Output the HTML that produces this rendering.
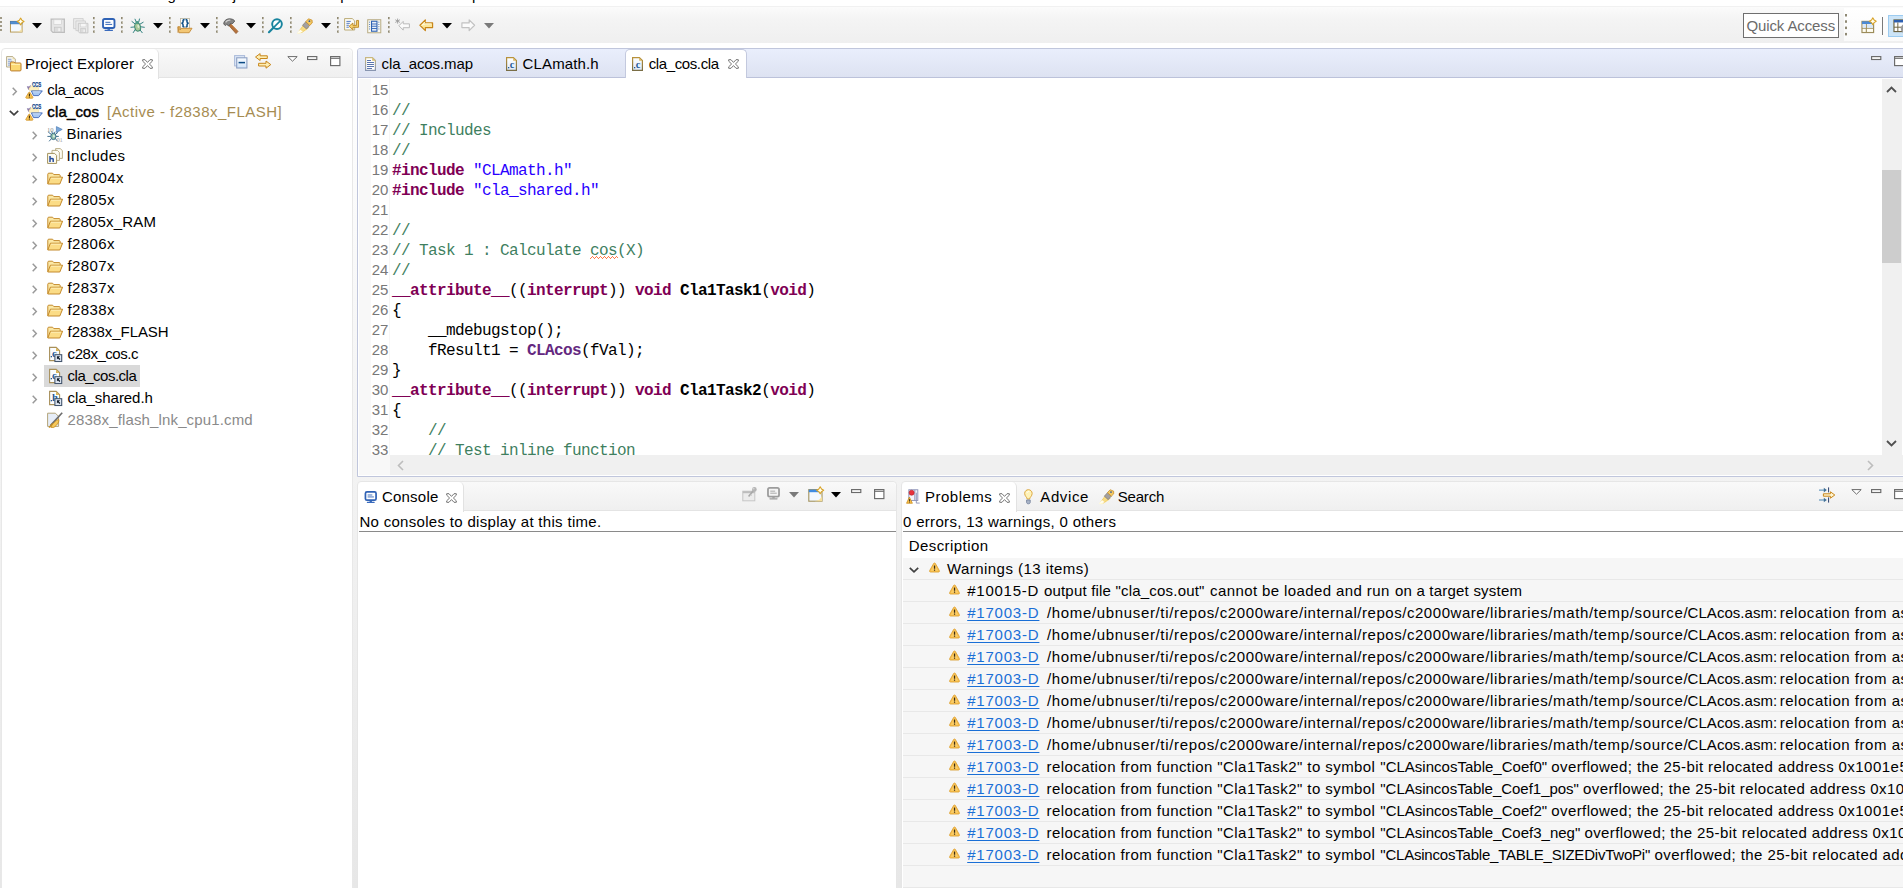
<!DOCTYPE html>
<html lang="en"><head><meta charset="utf-8"><title>workspace - cla_cos.cla - Code Composer Studio</title>
<style>
html,body{margin:0;padding:0}
body{width:1903px;height:888px;overflow:hidden;position:relative;background:linear-gradient(#fff 48px,#e7e7e7 888px);font-family:'Liberation Sans',sans-serif;font-size:15px;color:#000}
.t{position:absolute;white-space:pre;line-height:1}
.menu{position:absolute;top:-13.2px;font-size:15px;line-height:1;white-space:pre}
.ln{position:absolute;left:0;width:29.6px;text-align:right;font-size:15px;line-height:1;color:#787878;letter-spacing:-.2px}
.cl{position:absolute;left:33.5px;white-space:pre;line-height:1;font-family:'Liberation Mono',monospace;font-size:16.0px;letter-spacing:-.6px;color:#000}
svg{overflow:visible}
</style></head>
<body>
<div id="app" style="position:absolute;left:0;top:0;width:1903px;height:888px;overflow:hidden">
<div style="position:absolute;left:0px;top:0px;width:1903px;height:7px;background:#fff"></div>
<div style="position:absolute;left:0px;top:0px;width:1903px;height:5px;overflow:hidden"><span class="menu" style="left:8px">File</span><span class="menu" style="left:45px">Edit</span><span class="menu" style="left:85px">View</span><span class="menu" style="left:137.5px">Navigate</span><span class="menu" style="left:209.5px">Project</span><span class="menu" style="left:273px">Run</span><span class="menu" style="left:314.5px">Scripts</span><span class="menu" style="left:375px">Window</span><span class="menu" style="left:449.5px">Help</span></div>
<div style="position:absolute;left:0px;top:7px;width:1903px;height:36px;background:linear-gradient(#fbfbfb,#f4f4f4 35%,#efefef)"></div>
<div style="position:absolute;left:0px;top:6px;width:1903px;height:1px;background:#f1f1f1"></div>
<div style="position:absolute;left:1844px;top:8px;width:59px;height:33px;background:linear-gradient(#fff,#fafafa)"></div>
<svg style="position:absolute;left:0px;top:17px" width="2" height="15" viewBox="0 0 2 15"><rect x="0" y="0" width="2" height="2" fill="#a09a86"/><rect x="0" y="4" width="2" height="2" fill="#a09a86"/><rect x="0" y="8" width="2" height="2" fill="#a09a86"/><rect x="0" y="12" width="2" height="2" fill="#a09a86"/></svg><svg style="position:absolute;left:9px;top:17.6px" width="15.5" height="15.5" viewBox="0 0 16 16"><rect x="1.5" y="3.5" width="12" height="11" fill="#f4f9ff" stroke="#b89a55"/><rect x="1.5" y="3.5" width="12" height="2.6" fill="#4f8fd6" stroke="#3a74b8" stroke-width=".6"/><path d="M13.5 9C13 12 11 14 7.5 14.5H13.5Z" fill="#f3dfa0" opacity=".8"/><path d="M12.00 0.10L13.34 2.26L15.50 3.60L13.34 4.94L12.00 7.10L10.66 4.94L8.50 3.60L10.66 2.26Z" fill="#fffef2" stroke="#d9a326" stroke-width="1.1" stroke-linejoin="round"/></svg><svg style="position:absolute;left:31.5px;top:23px" width="10" height="6" viewBox="0 0 10 6"><path d="M0 0H10L5 5.6Z" fill="#000"/></svg><svg style="position:absolute;left:49.5px;top:17.6px" width="15.5" height="15.5" viewBox="0 0 16 16"><path d="M1.2 1.2H14.8V14.8H3L1.2 13Z" fill="#e6e6e6" stroke="#bdbdbd" stroke-width="1.3"/><rect x="4" y="1.8" width="8" height="5" fill="#f6f6f6" stroke="#cfcfcf" stroke-width=".7"/><rect x="4.5" y="9.5" width="7" height="5" fill="#dcdcdc" stroke="#c4c4c4" stroke-width=".7"/><rect x="8.5" y="10.5" width="2" height="3" fill="#f1f1f1"/></svg><svg style="position:absolute;left:73px;top:17.6px" width="15.5" height="15.5" viewBox="0 0 16 16"><path d="M1 1H10V3H1Z" fill="#e6e6e6"/><path d="M0.6 .6H10.5V11H.6Z" fill="#ececec" stroke="#cacaca" stroke-width=".8"/><path d="M3 3H12.8V13H3Z" fill="#ececec" stroke="#cacaca" stroke-width=".8"/><path d="M5.5 5.5H15.4V15.4H6.8L5.5 14Z" fill="#e9e9e9" stroke="#c4c4c4" stroke-width=".9"/><rect x="7.5" y="5.8" width="6" height="3.4" fill="#f6f6f6" stroke="#cfcfcf" stroke-width=".6"/><rect x="8" y="11" width="5" height="4.2" fill="#dcdcdc" stroke="#c4c4c4" stroke-width=".6"/><rect x="10.8" y="12" width="1.4" height="2.4" fill="#f3f3f3"/></svg><svg style="position:absolute;left:93px;top:17.3px" width="2" height="16" viewBox="0 0 2 16"><rect x="0" y="0.0" width="1.9" height="2.2" fill="#8f8974"/><rect x="1.1" y="0.3" width=".8" height="1.6" fill="#c9c4b2"/><rect x="0" y="4.5" width="1.9" height="2.2" fill="#8f8974"/><rect x="1.1" y="4.8" width=".8" height="1.6" fill="#c9c4b2"/><rect x="0" y="9.0" width="1.9" height="2.2" fill="#8f8974"/><rect x="1.1" y="9.3" width=".8" height="1.6" fill="#c9c4b2"/><rect x="0" y="13.5" width="1.9" height="2.2" fill="#8f8974"/><rect x="1.1" y="13.8" width=".8" height="1.6" fill="#c9c4b2"/></svg><svg style="position:absolute;left:102px;top:18.1px" width="13.5" height="13.5" viewBox="0 0 16 16"><rect x="1.2" y="1.2" width="13.6" height="10.6" rx="2" fill="#fdfeff" stroke="#2f62b5" stroke-width="2.2"/><rect x="4" y="4.5" width="6" height="1.2" fill="#3d6dbb"/><rect x="4" y="7" width="8" height="1.2" fill="#3d6dbb"/><rect x="6.5" y="12.5" width="3" height="1.5" fill="#2f62b5"/><rect x="3" y="13.8" width="10" height="1.6" rx=".5" fill="#3a6bbd"/></svg><svg style="position:absolute;left:121px;top:17.3px" width="2" height="16" viewBox="0 0 2 16"><rect x="0" y="0.0" width="1.9" height="2.2" fill="#8f8974"/><rect x="1.1" y="0.3" width=".8" height="1.6" fill="#c9c4b2"/><rect x="0" y="4.5" width="1.9" height="2.2" fill="#8f8974"/><rect x="1.1" y="4.8" width=".8" height="1.6" fill="#c9c4b2"/><rect x="0" y="9.0" width="1.9" height="2.2" fill="#8f8974"/><rect x="1.1" y="9.3" width=".8" height="1.6" fill="#c9c4b2"/><rect x="0" y="13.5" width="1.9" height="2.2" fill="#8f8974"/><rect x="1.1" y="13.8" width=".8" height="1.6" fill="#c9c4b2"/></svg><svg style="position:absolute;left:129.5px;top:17.6px" width="15.5" height="15.5" viewBox="0 0 16 16"><g stroke="#2e7f7f" stroke-width="1" fill="none" stroke-linecap="round"><path d="M5.6 6.4L2 3.6M10.2 6.4L13.6 4.4M5 9.2L1 9.6M10.8 9L14.8 9.6M5.6 11.6L3.4 15M10 11.8L12.6 15.2M6.6 4.4L5.2 1.2M9 4.2L9.8 1"/></g><ellipse cx="7.9" cy="9.4" rx="3" ry="4.2" fill="#a9c99a" stroke="#3e8a72" stroke-width="1" transform="rotate(-12 7.9 9.4)"/><ellipse cx="7.4" cy="4.6" rx="1.8" ry="1.4" fill="#4c9a86"/><ellipse cx="8.6" cy="8.6" rx="1" ry="1.8" fill="#dcecd2" transform="rotate(-12 8.6 8.6)"/></svg><svg style="position:absolute;left:152.5px;top:23px" width="10" height="6" viewBox="0 0 10 6"><path d="M0 0H10L5 5.6Z" fill="#000"/></svg><svg style="position:absolute;left:168.5px;top:17.3px" width="2" height="16" viewBox="0 0 2 16"><rect x="0" y="0.0" width="1.9" height="2.2" fill="#8f8974"/><rect x="1.1" y="0.3" width=".8" height="1.6" fill="#c9c4b2"/><rect x="0" y="4.5" width="1.9" height="2.2" fill="#8f8974"/><rect x="1.1" y="4.8" width=".8" height="1.6" fill="#c9c4b2"/><rect x="0" y="9.0" width="1.9" height="2.2" fill="#8f8974"/><rect x="1.1" y="9.3" width=".8" height="1.6" fill="#c9c4b2"/><rect x="0" y="13.5" width="1.9" height="2.2" fill="#8f8974"/><rect x="1.1" y="13.8" width=".8" height="1.6" fill="#c9c4b2"/></svg><svg style="position:absolute;left:176.5px;top:17.6px" width="15.5" height="15.5" viewBox="0 0 16 16"><rect x="3.6" y=".5" width="9.2" height="10.5" fill="#fff" stroke="#bdb8a4" stroke-width=".9"/><path d="M7.8 1.7C5.6 1.7 6.3 2.8 6.3 3.9C6.3 4.9 5.6 5.3 4.6 5.5C5.6 5.7 6.3 6.1 6.3 7.1C6.3 8.2 5.6 9.3 7.8 9.3M8.8 1.7C11 1.7 10.3 2.8 10.3 3.9C10.3 4.9 11 5.3 12 5.5C11 5.7 10.3 6.1 10.3 7.1C10.3 8.2 11 9.3 8.8 9.3" fill="none" stroke="#0d4f86" stroke-width="1.6"/><path d="M1 9L2 15.2H12.5L15.5 10.6H4.5L3 12.4V9Z" fill="#f3c775" stroke="#c28832" stroke-width=".9" stroke-linejoin="round"/><path d="M1 9V15.2" stroke="#c28832" stroke-width=".9"/></svg><svg style="position:absolute;left:199.5px;top:23px" width="10" height="6" viewBox="0 0 10 6"><path d="M0 0H10L5 5.6Z" fill="#000"/></svg><svg style="position:absolute;left:215.5px;top:17.3px" width="2" height="16" viewBox="0 0 2 16"><rect x="0" y="0.0" width="1.9" height="2.2" fill="#8f8974"/><rect x="1.1" y="0.3" width=".8" height="1.6" fill="#c9c4b2"/><rect x="0" y="4.5" width="1.9" height="2.2" fill="#8f8974"/><rect x="1.1" y="4.8" width=".8" height="1.6" fill="#c9c4b2"/><rect x="0" y="9.0" width="1.9" height="2.2" fill="#8f8974"/><rect x="1.1" y="9.3" width=".8" height="1.6" fill="#c9c4b2"/><rect x="0" y="13.5" width="1.9" height="2.2" fill="#8f8974"/><rect x="1.1" y="13.8" width=".8" height="1.6" fill="#c9c4b2"/></svg><svg style="position:absolute;left:222.5px;top:17.6px" width="16" height="16" viewBox="0 0 16 16"><path d="M7.6 5.6L15 13.4L13 15.6L5.8 7.4Z" fill="#b5713a" stroke="#8a5224" stroke-width=".7"/><path d="M8.4 6.4L14 12.4" stroke="#d79a62" stroke-width=".8"/><path d="M.8 6.2C.6 3.2 3 1 6.2 .8C8.6 .7 10.8 1.6 11.8 3L9.2 6L8.2 5L5.6 8L3.8 6.4L2.6 7.6Z" fill="#858585" stroke="#4e4e4e" stroke-width=".8" stroke-linejoin="round"/><path d="M2.6 4.4C3.6 2.8 5.4 2 7.4 2.2" stroke="#cfcfcf" stroke-width="1.1" fill="none"/></svg><svg style="position:absolute;left:245.5px;top:23px" width="10" height="6" viewBox="0 0 10 6"><path d="M0 0H10L5 5.6Z" fill="#000"/></svg><svg style="position:absolute;left:261.5px;top:17.3px" width="2" height="16" viewBox="0 0 2 16"><rect x="0" y="0.0" width="1.9" height="2.2" fill="#8f8974"/><rect x="1.1" y="0.3" width=".8" height="1.6" fill="#c9c4b2"/><rect x="0" y="4.5" width="1.9" height="2.2" fill="#8f8974"/><rect x="1.1" y="4.8" width=".8" height="1.6" fill="#c9c4b2"/><rect x="0" y="9.0" width="1.9" height="2.2" fill="#8f8974"/><rect x="1.1" y="9.3" width=".8" height="1.6" fill="#c9c4b2"/><rect x="0" y="13.5" width="1.9" height="2.2" fill="#8f8974"/><rect x="1.1" y="13.8" width=".8" height="1.6" fill="#c9c4b2"/></svg><svg style="position:absolute;left:268px;top:17.6px" width="15.5" height="15.5" viewBox="0 0 16 16"><circle cx="9.3" cy="6.3" r="5" fill="#fff" stroke="#18849e" stroke-width="2"/><path d="M5.6 10L1 14.6" stroke="#18849e" stroke-width="2.2" stroke-linecap="round"/><path d="M6.2 9.4L12.4 3.2" stroke="#18849e" stroke-width="1.6"/></svg><svg style="position:absolute;left:289.5px;top:17.3px" width="2" height="16" viewBox="0 0 2 16"><rect x="0" y="0.0" width="1.9" height="2.2" fill="#8f8974"/><rect x="1.1" y="0.3" width=".8" height="1.6" fill="#c9c4b2"/><rect x="0" y="4.5" width="1.9" height="2.2" fill="#8f8974"/><rect x="1.1" y="4.8" width=".8" height="1.6" fill="#c9c4b2"/><rect x="0" y="9.0" width="1.9" height="2.2" fill="#8f8974"/><rect x="1.1" y="9.3" width=".8" height="1.6" fill="#c9c4b2"/><rect x="0" y="13.5" width="1.9" height="2.2" fill="#8f8974"/><rect x="1.1" y="13.8" width=".8" height="1.6" fill="#c9c4b2"/></svg><svg style="position:absolute;left:296px;top:17.6px" width="17" height="16" viewBox="0 0 16 16"><path d="M.4 15.6L6.4 7L11.4 11.4L3.6 15.8Z" fill="#fff6c4"/><path d="M2.6 13L8 5.8L12.2 9.6L5.4 14.4Z" fill="#f8dc84" stroke="#e6bc52" stroke-width=".6"/><path d="M.6 15.6L3.6 11.4L6.4 13.8Z" fill="#fffdf0"/><path d="M6 7.4L9.2 3.8L13.2 7.4L10 11Z" fill="#a3a0a0" stroke="#747070" stroke-width=".6"/><path d="M9.2 3.8L12 .8L15.6 2.2L15.7 5L13.2 7.4Z" fill="#f3c964" stroke="#c98d26" stroke-width=".8" stroke-linejoin="round"/><circle cx="12.9" cy="3.2" r=".9" fill="#355c9c"/></svg><svg style="position:absolute;left:320.5px;top:23px" width="10" height="6" viewBox="0 0 10 6"><path d="M0 0H10L5 5.6Z" fill="#000"/></svg><svg style="position:absolute;left:336.5px;top:17.3px" width="2" height="16" viewBox="0 0 2 16"><rect x="0" y="0.0" width="1.9" height="2.2" fill="#8f8974"/><rect x="1.1" y="0.3" width=".8" height="1.6" fill="#c9c4b2"/><rect x="0" y="4.5" width="1.9" height="2.2" fill="#8f8974"/><rect x="1.1" y="4.8" width=".8" height="1.6" fill="#c9c4b2"/><rect x="0" y="9.0" width="1.9" height="2.2" fill="#8f8974"/><rect x="1.1" y="9.3" width=".8" height="1.6" fill="#c9c4b2"/><rect x="0" y="13.5" width="1.9" height="2.2" fill="#8f8974"/><rect x="1.1" y="13.8" width=".8" height="1.6" fill="#c9c4b2"/></svg><svg style="position:absolute;left:344px;top:17.6px" width="15.5" height="15.5" viewBox="0 0 16 16"><path d="M.6 .6H8.5L11 3V12.4H.6Z" fill="#fdfcf6" stroke="#b9a873" stroke-width="1"/><g stroke="#4f78c2" stroke-width="1"><path d="M2.5 3.5H7M2.5 5.5H6M2.5 7.5H5M2.5 9.5H5"/></g><path d="M13 2.5H15V9.6H9.2V12L5.2 8.6L9.2 5.2V7.6H13Z" fill="#f7d370" stroke="#b8821e" stroke-width=".9" stroke-linejoin="round"/></svg><svg style="position:absolute;left:367px;top:18.6px" width="14.5" height="14.5" viewBox="0 0 16 16"><rect x=".8" y=".8" width="14.4" height="14.4" fill="#fbfaf2" stroke="#b7ab83" stroke-width="1.1"/><rect x="5" y="2.5" width="6" height="11" fill="#eaf1fb" stroke="#2f63b4" stroke-width="1.2"/><g stroke="#2f63b4" stroke-width="1"><path d="M5 5.5H11M5 8H11M5 10.5H11"/></g><g fill="#2f63b4"><rect x="2.4" y="3" width="1" height="1"/><rect x="2.4" y="5.5" width="1" height="1"/><rect x="2.4" y="8" width="1" height="1"/><rect x="2.4" y="10.5" width="1" height="1"/><rect x="12.6" y="3" width="1" height="1"/><rect x="12.6" y="5.5" width="1" height="1"/><rect x="12.6" y="8" width="1" height="1"/><rect x="12.6" y="10.5" width="1" height="1"/></g></svg><svg style="position:absolute;left:387.5px;top:17.3px" width="2" height="16" viewBox="0 0 2 16"><rect x="0" y="0.0" width="1.9" height="2.2" fill="#8f8974"/><rect x="1.1" y="0.3" width=".8" height="1.6" fill="#c9c4b2"/><rect x="0" y="4.5" width="1.9" height="2.2" fill="#8f8974"/><rect x="1.1" y="4.8" width=".8" height="1.6" fill="#c9c4b2"/><rect x="0" y="9.0" width="1.9" height="2.2" fill="#8f8974"/><rect x="1.1" y="9.3" width=".8" height="1.6" fill="#c9c4b2"/><rect x="0" y="13.5" width="1.9" height="2.2" fill="#8f8974"/><rect x="1.1" y="13.8" width=".8" height="1.6" fill="#c9c4b2"/></svg><svg style="position:absolute;left:393.5px;top:17.6px" width="16.5" height="15.5" viewBox="0 0 16 16"><path d="M9 3.5L4.5 8L9 12.5V10H15.4V6H9Z" fill="#fbfbfb" stroke="#b9b9b9" stroke-width="1" stroke-linejoin="round"/><g stroke="#9a9a9a" stroke-width=".9"><path d="M3.2 .6V5.8M.8 1.8L5.6 4.6M5.6 1.8L.8 4.6"/></g></svg><svg style="position:absolute;left:418.5px;top:18.1px" width="14.5" height="14.5" viewBox="0 0 16 16"><path d="M7 2L1 8L7 14V10.6H15V5.4H7Z" fill="#fce79a" stroke="#c8861a" stroke-width="1.3" stroke-linejoin="round"/><path d="M7 4.2L3 8L7 6.5H13.6" stroke="#fffbe0" stroke-width="1" fill="none"/></svg><svg style="position:absolute;left:441.5px;top:23px" width="10" height="6" viewBox="0 0 10 6"><path d="M0 0H10L5 5.6Z" fill="#000"/></svg><svg style="position:absolute;left:460.5px;top:18.1px" width="14.5" height="14.5" viewBox="0 0 16 16"><path d="M9 2L15 8L9 14V10.6H1V5.4H9Z" fill="#fbfbfb" stroke="#c2c2c2" stroke-width="1.3" stroke-linejoin="round"/></svg><svg style="position:absolute;left:483.5px;top:23px" width="10" height="6" viewBox="0 0 10 6"><path d="M0 0H10L5 5.6Z" fill="#7a7a7a"/></svg><div style="position:absolute;left:1743px;top:13px;width:94px;height:23px;border:1px solid #6f6f6f;background:#fff"></div><svg style="position:absolute;left:1845px;top:14.4px" width="2" height="22" viewBox="0 0 2 22"><rect x="0" y="0.0" width="2" height="2.5" fill="#8f8974"/><rect x="0" y="6.3" width="2" height="2.5" fill="#8f8974"/><rect x="0" y="12.6" width="2" height="2.5" fill="#8f8974"/><rect x="0" y="18.9" width="2" height="2.5" fill="#8f8974"/></svg><svg style="position:absolute;left:1860.5px;top:18px" width="15.5" height="15.5" viewBox="0 0 16 16"><rect x="1" y="3.5" width="12" height="11.5" fill="#fffdf3" stroke="#9c8c5a" stroke-width="1.2"/><rect x="1" y="3.5" width="12" height="2.8" fill="#4c8ad4"/><path d="M5.5 6.3V15M1 10.5H13" stroke="#9c8c5a" stroke-width="1.1"/><rect x="1.8" y="6.6" width="3.2" height="3.4" fill="#d8e8fb"/><rect x="6.2" y="6.6" width="6.2" height="3.4" fill="#d8e8fb"/><path d="M12.20 -0.10L13.54 2.06L15.70 3.40L13.54 4.74L12.20 6.90L10.86 4.74L8.70 3.40L10.86 2.06Z" fill="#fffef2" stroke="#d9a326" stroke-width="1.1" stroke-linejoin="round"/></svg><div style="position:absolute;left:1882px;top:17px;width:1px;height:18px;background:#7a7a7a"></div><div style="position:absolute;left:1888px;top:15px;width:20px;height:19.5px;background:#cce4f7;border:1px solid #9ccbf0"></div><svg style="position:absolute;left:1893px;top:18px" width="15.5" height="15.5" viewBox="0 0 16 16"><rect x="1" y="2" width="14" height="12" fill="#fff" stroke="#6b6240" stroke-width="1.2"/><rect x="1" y="2" width="14" height="2.6" fill="#2d5fb0"/><path d="M5 4.6V14M1 9.5H15" stroke="#6b6240" stroke-width="1"/><circle cx="13" cy="11" r="5" fill="#9b9b9b"/></svg>
<div style="position:absolute;left:1px;top:48px;width:352px;height:842px;border:1px solid #e8e8e8;border-radius:4px 4px 0 0;background:#fff;box-sizing:border-box"></div><div style="position:absolute;left:2px;top:49px;width:350px;height:28.5px;background:linear-gradient(#f9f9f9,#efefef);border-radius:5px 5px 0 0"></div><div style="position:absolute;left:2px;top:77px;width:350px;height:1px;background:#e4e4e4"></div><div style="position:absolute;left:2px;top:49px;width:157px;height:29.5px;background:#fff;border-radius:5px 5px 0 0;border-right:1px solid #e2e2e2;box-sizing:border-box"></div><svg style="position:absolute;left:5.8px;top:55.6px" width="15.5" height="15.5" viewBox="0 0 16 16"><path d="M.6 .6H7L9.6 3.2V11.4H.6Z" fill="#f8f6ec" stroke="#ada17a" stroke-width=".9"/><path d="M6.8 .8V3.4H9.4Z" fill="#e6d8a6"/><g stroke="#6f93d6" stroke-width=".9"><path d="M2 3.4H5.6M2 5.4H6.4M2 7.4H5.2M2 9.4H4.4"/></g><path d="M4.6 7.3C4.6 6.6 5 6.2 5.6 6.2H8.2L9.2 7.2H14.6C15.2 7.2 15.5 7.6 15.5 8.2V14.4C15.5 15 15.1 15.4 14.5 15.4H5.6C5 15.4 4.6 15 4.6 14.4Z" fill="#fbd873" stroke="#b97a2c" stroke-width="1"/><path d="M5.4 8.6H14.6" stroke="#fff3c0" stroke-width="1"/></svg><svg style="position:absolute;left:141.5px;top:59px" width="11" height="10" viewBox="0 0 11 10"><path d="M.7 .7H3L5.5 3.4L8 .7H10.3V2.2L7.4 5L10.3 7.8V9.3H8L5.5 6.6L3 9.3H.7V7.8L3.6 5L.7 2.2Z" fill="#fff" stroke="#666" stroke-width=".9" stroke-linejoin="round"/></svg><svg style="position:absolute;left:234px;top:55px" width="16" height="16" viewBox="0 0 16 16"><defs><linearGradient id="clg" x1="0" y1="0" x2="0" y2="1"><stop offset="0" stop-color="#fafdff"/><stop offset="1" stop-color="#cfe2f8"/></linearGradient></defs><rect x=".6" y=".6" width="10" height="10.3" fill="#dde8f7" stroke="#a9bad9" stroke-width="1"/><rect x="2.7" y="2.8" width="10.2" height="10.2" fill="url(#clg)" stroke="#8da0c4" stroke-width="1.1"/><path d="M4.6 7.6H11" stroke="#0b4a84" stroke-width="1.5"/></svg><svg style="position:absolute;left:255px;top:53px" width="16" height="16" viewBox="0 0 16 16"><path d="M.5 4L5.1 .6V2.8H12.3V5.5H5.1V7.5Z" fill="#fdeeb4" stroke="#c8861a" stroke-width="1" stroke-linejoin="round"/><path d="M15.8 11.6L11 8V10.3H3.6V13H11V15.2Z" fill="#fdeeb4" stroke="#c8861a" stroke-width="1" stroke-linejoin="round"/></svg><svg style="position:absolute;left:286.5px;top:55.8px" width="11" height="6" viewBox="0 0 11 6"><path d="M.8 .6H10.2L5.5 5.2Z" fill="#fff" stroke="#6a6a6a" stroke-width="1"/></svg><svg style="position:absolute;left:306.5px;top:56px" width="11" height="5" viewBox="0 0 11 5"><rect x=".6" y=".6" width="9.2" height="2.9" fill="#fff" stroke="#6a6a6a" stroke-width="1.15"/></svg><svg style="position:absolute;left:329.5px;top:56px" width="11" height="11" viewBox="0 0 11 11"><rect x=".6" y=".6" width="9.3" height="9" fill="#fff" stroke="#6a6a6a" stroke-width="1.15"/><path d="M.6 2.3H9.9" stroke="#6a6a6a" stroke-width="1.1"/></svg><svg style="position:absolute;left:11.5px;top:86.6px" width="6" height="10" viewBox="0 0 6 10"><path d="M.7 .7L4.3 4.5L.7 8.3" fill="none" stroke="#9a9a9a" stroke-width="1.5"/></svg><svg style="position:absolute;left:26px;top:81.5px" width="16" height="16" viewBox="0 0 16 16"><text x="5.9" y="4.9" font-family="Liberation Sans" font-size="6.3" font-weight="bold" fill="#174a8c" stroke="#174a8c" stroke-width=".25" textLength="9.4" lengthAdjust="spacingAndGlyphs">CCS</text><path d="M.8 4.2L3.2 4.4L4.6 2.8L4.6 5.4L6 6.8L3.6 6.6L2.4 8Z" fill="#8a7aa8"/><path d="M3 6.2L6.4 3.4L7.2 5.6H12.6V8.6H3.6Z" fill="#fdf0c0" stroke="#f1d98a" stroke-width=".5"/><path d="M5.4 8.9H16.3L12.6 13.6H7.5Z" fill="#a9c8f2" stroke="#3d66b8" stroke-width=".9" stroke-linejoin="round"/><path d="M6.6 9.8H14.4" stroke="#dbe9fb" stroke-width=".8"/><path d="M2.7 10.5C3 9.9 3.7 9.9 4 10.5L6.8 15.2C7.1 15.8 6.8 16.2 6.2 16.2H.5C-.1 16.2 -.4 15.8 -.1 15.2Z" fill="#f9c552" stroke="#cf922a" stroke-width=".8"/><rect x="2.85" y="11.6" width="1" height="2.4" fill="#2a1c08"/><rect x="2.85" y="14.5" width="1" height="1" fill="#2a1c08"/></svg><svg style="position:absolute;left:8.7px;top:110.2px" width="10" height="6" viewBox="0 0 10 6"><path d="M.8 .8L5 4.8L9.2 .8" fill="none" stroke="#404040" stroke-width="1.7"/></svg><svg style="position:absolute;left:26px;top:103.5px" width="16" height="16" viewBox="0 0 16 16"><text x="5.9" y="4.9" font-family="Liberation Sans" font-size="6.3" font-weight="bold" fill="#174a8c" stroke="#174a8c" stroke-width=".25" textLength="9.4" lengthAdjust="spacingAndGlyphs">CCS</text><path d="M.8 4.2L3.2 4.4L4.6 2.8L4.6 5.4L6 6.8L3.6 6.6L2.4 8Z" fill="#8a7aa8"/><path d="M3 6.2L6.4 3.4L7.2 5.6H12.6V8.6H3.6Z" fill="#fdf0c0" stroke="#f1d98a" stroke-width=".5"/><path d="M5.4 8.9H16.3L12.6 13.6H7.5Z" fill="#a9c8f2" stroke="#3d66b8" stroke-width=".9" stroke-linejoin="round"/><path d="M6.6 9.8H14.4" stroke="#dbe9fb" stroke-width=".8"/><path d="M2.7 10.5C3 9.9 3.7 9.9 4 10.5L6.8 15.2C7.1 15.8 6.8 16.2 6.2 16.2H.5C-.1 16.2 -.4 15.8 -.1 15.2Z" fill="#f9c552" stroke="#cf922a" stroke-width=".8"/><rect x="2.85" y="11.6" width="1" height="2.4" fill="#2a1c08"/><rect x="2.85" y="14.5" width="1" height="1" fill="#2a1c08"/></svg><svg style="position:absolute;left:31.5px;top:130.6px" width="6" height="10" viewBox="0 0 6 10"><path d="M.7 .7L4.3 4.5L.7 8.3" fill="none" stroke="#9a9a9a" stroke-width="1.5"/></svg><svg style="position:absolute;left:46.5px;top:125.5px" width="16" height="16" viewBox="0 0 16 16"><text x="0" y="5.6" font-family="Liberation Serif" font-size="6.6" fill="#8a8a8a">10</text><path d="M9.4 .6L15.2 3.4L9.4 6.4Z" fill="#7aa6d8" stroke="#4f7fb8" stroke-width=".7"/><g stroke="#3f6f8f" stroke-width="1" fill="none" stroke-linecap="round"><path d="M4.4 8.4L1.6 6.4M4 10.4H.8M4.6 12.4L2.4 15M8.4 8.4L10.6 6.6M8.8 10.4H11.4M8.2 12.4L10 14.6M5.6 7.4L4.8 6M7.2 7.4L8 6"/></g><ellipse cx="6.4" cy="10.4" rx="2.6" ry="3.2" fill="#8fbfa8" stroke="#3f6f8f" stroke-width="1"/><ellipse cx="6.9" cy="10.2" rx="1" ry="1.4" fill="#d6eadc"/><text x="9.4" y="15.6" font-family="Liberation Serif" font-size="6.4" fill="#a4a4a4">01</text></svg><svg style="position:absolute;left:31.5px;top:152.6px" width="6" height="10" viewBox="0 0 6 10"><path d="M.7 .7L4.3 4.5L.7 8.3" fill="none" stroke="#9a9a9a" stroke-width="1.5"/></svg><svg style="position:absolute;left:46.5px;top:147.5px" width="16" height="16" viewBox="0 0 16 16"><path d="M8.6 .6H13.2L15.4 2.6V10.4H8.6Z" fill="#fdfbf2" stroke="#b3a67c" stroke-width=".9"/><path d="M5 2.4H10.4L12.4 4.4V12.4H5Z" fill="#fdfbf2" stroke="#b3a67c" stroke-width=".9"/><path d="M.6 5.4H7.6L9.6 7.4V15.4H.6Z" fill="#fdfbf2" stroke="#a3925c" stroke-width="1"/><path d="M3 8V14M3 11.2C3.4 10.4 6.2 10 6.2 11.6V14" fill="none" stroke="#274f9e" stroke-width="1.5"/></svg><svg style="position:absolute;left:31.5px;top:174.6px" width="6" height="10" viewBox="0 0 6 10"><path d="M.7 .7L4.3 4.5L.7 8.3" fill="none" stroke="#9a9a9a" stroke-width="1.5"/></svg><svg style="position:absolute;left:46.5px;top:169.5px" width="16" height="16" viewBox="0 0 16 16"><path d="M.8 13.8V4.2C.8 3.6 1.2 3.2 1.8 3.2H5.6L6.8 4.6H12.2C12.8 4.6 13.2 5 13.2 5.6V7" fill="#fce9a6" stroke="#c48a2c" stroke-width="1" stroke-linejoin="round"/><path d="M.8 14L3.4 7.2H15.6L12.8 14Z" fill="#fbdc86" stroke="#c48a2c" stroke-width="1" stroke-linejoin="round"/><path d="M4 8.2H14" stroke="#fff4c8" stroke-width=".8"/></svg><svg style="position:absolute;left:31.5px;top:196.6px" width="6" height="10" viewBox="0 0 6 10"><path d="M.7 .7L4.3 4.5L.7 8.3" fill="none" stroke="#9a9a9a" stroke-width="1.5"/></svg><svg style="position:absolute;left:46.5px;top:191.5px" width="16" height="16" viewBox="0 0 16 16"><path d="M.8 13.8V4.2C.8 3.6 1.2 3.2 1.8 3.2H5.6L6.8 4.6H12.2C12.8 4.6 13.2 5 13.2 5.6V7" fill="#fce9a6" stroke="#c48a2c" stroke-width="1" stroke-linejoin="round"/><path d="M.8 14L3.4 7.2H15.6L12.8 14Z" fill="#fbdc86" stroke="#c48a2c" stroke-width="1" stroke-linejoin="round"/><path d="M4 8.2H14" stroke="#fff4c8" stroke-width=".8"/></svg><svg style="position:absolute;left:31.5px;top:218.6px" width="6" height="10" viewBox="0 0 6 10"><path d="M.7 .7L4.3 4.5L.7 8.3" fill="none" stroke="#9a9a9a" stroke-width="1.5"/></svg><svg style="position:absolute;left:46.5px;top:213.5px" width="16" height="16" viewBox="0 0 16 16"><path d="M.8 13.8V4.2C.8 3.6 1.2 3.2 1.8 3.2H5.6L6.8 4.6H12.2C12.8 4.6 13.2 5 13.2 5.6V7" fill="#fce9a6" stroke="#c48a2c" stroke-width="1" stroke-linejoin="round"/><path d="M.8 14L3.4 7.2H15.6L12.8 14Z" fill="#fbdc86" stroke="#c48a2c" stroke-width="1" stroke-linejoin="round"/><path d="M4 8.2H14" stroke="#fff4c8" stroke-width=".8"/></svg><svg style="position:absolute;left:31.5px;top:240.6px" width="6" height="10" viewBox="0 0 6 10"><path d="M.7 .7L4.3 4.5L.7 8.3" fill="none" stroke="#9a9a9a" stroke-width="1.5"/></svg><svg style="position:absolute;left:46.5px;top:235.5px" width="16" height="16" viewBox="0 0 16 16"><path d="M.8 13.8V4.2C.8 3.6 1.2 3.2 1.8 3.2H5.6L6.8 4.6H12.2C12.8 4.6 13.2 5 13.2 5.6V7" fill="#fce9a6" stroke="#c48a2c" stroke-width="1" stroke-linejoin="round"/><path d="M.8 14L3.4 7.2H15.6L12.8 14Z" fill="#fbdc86" stroke="#c48a2c" stroke-width="1" stroke-linejoin="round"/><path d="M4 8.2H14" stroke="#fff4c8" stroke-width=".8"/></svg><svg style="position:absolute;left:31.5px;top:262.6px" width="6" height="10" viewBox="0 0 6 10"><path d="M.7 .7L4.3 4.5L.7 8.3" fill="none" stroke="#9a9a9a" stroke-width="1.5"/></svg><svg style="position:absolute;left:46.5px;top:257.5px" width="16" height="16" viewBox="0 0 16 16"><path d="M.8 13.8V4.2C.8 3.6 1.2 3.2 1.8 3.2H5.6L6.8 4.6H12.2C12.8 4.6 13.2 5 13.2 5.6V7" fill="#fce9a6" stroke="#c48a2c" stroke-width="1" stroke-linejoin="round"/><path d="M.8 14L3.4 7.2H15.6L12.8 14Z" fill="#fbdc86" stroke="#c48a2c" stroke-width="1" stroke-linejoin="round"/><path d="M4 8.2H14" stroke="#fff4c8" stroke-width=".8"/></svg><svg style="position:absolute;left:31.5px;top:284.6px" width="6" height="10" viewBox="0 0 6 10"><path d="M.7 .7L4.3 4.5L.7 8.3" fill="none" stroke="#9a9a9a" stroke-width="1.5"/></svg><svg style="position:absolute;left:46.5px;top:279.5px" width="16" height="16" viewBox="0 0 16 16"><path d="M.8 13.8V4.2C.8 3.6 1.2 3.2 1.8 3.2H5.6L6.8 4.6H12.2C12.8 4.6 13.2 5 13.2 5.6V7" fill="#fce9a6" stroke="#c48a2c" stroke-width="1" stroke-linejoin="round"/><path d="M.8 14L3.4 7.2H15.6L12.8 14Z" fill="#fbdc86" stroke="#c48a2c" stroke-width="1" stroke-linejoin="round"/><path d="M4 8.2H14" stroke="#fff4c8" stroke-width=".8"/></svg><svg style="position:absolute;left:31.5px;top:306.6px" width="6" height="10" viewBox="0 0 6 10"><path d="M.7 .7L4.3 4.5L.7 8.3" fill="none" stroke="#9a9a9a" stroke-width="1.5"/></svg><svg style="position:absolute;left:46.5px;top:301.5px" width="16" height="16" viewBox="0 0 16 16"><path d="M.8 13.8V4.2C.8 3.6 1.2 3.2 1.8 3.2H5.6L6.8 4.6H12.2C12.8 4.6 13.2 5 13.2 5.6V7" fill="#fce9a6" stroke="#c48a2c" stroke-width="1" stroke-linejoin="round"/><path d="M.8 14L3.4 7.2H15.6L12.8 14Z" fill="#fbdc86" stroke="#c48a2c" stroke-width="1" stroke-linejoin="round"/><path d="M4 8.2H14" stroke="#fff4c8" stroke-width=".8"/></svg><svg style="position:absolute;left:31.5px;top:328.6px" width="6" height="10" viewBox="0 0 6 10"><path d="M.7 .7L4.3 4.5L.7 8.3" fill="none" stroke="#9a9a9a" stroke-width="1.5"/></svg><svg style="position:absolute;left:46.5px;top:323.5px" width="16" height="16" viewBox="0 0 16 16"><path d="M.8 13.8V4.2C.8 3.6 1.2 3.2 1.8 3.2H5.6L6.8 4.6H12.2C12.8 4.6 13.2 5 13.2 5.6V7" fill="#fce9a6" stroke="#c48a2c" stroke-width="1" stroke-linejoin="round"/><path d="M.8 14L3.4 7.2H15.6L12.8 14Z" fill="#fbdc86" stroke="#c48a2c" stroke-width="1" stroke-linejoin="round"/><path d="M4 8.2H14" stroke="#fff4c8" stroke-width=".8"/></svg><svg style="position:absolute;left:31.5px;top:350.6px" width="6" height="10" viewBox="0 0 6 10"><path d="M.7 .7L4.3 4.5L.7 8.3" fill="none" stroke="#9a9a9a" stroke-width="1.5"/></svg><svg style="position:absolute;left:46.5px;top:345.5px" width="16" height="16" viewBox="0 0 16 16"><path d="M2.6 1.4H9.2L12.6 4.8V14.6H2.6Z" fill="#fbfdff" stroke="#a8905a" stroke-width="1.1"/><path d="M9 1.6V5H12.4Z" fill="#dcb65a"/><rect x="3.7" y="10" width="1.3" height="1.3" fill="#1f5a96"/><text x="5.1" y="11.4" font-family="Liberation Serif" font-size="10.5" font-weight="bold" fill="#1f5a96">c</text><g transform="translate(-.7 .3)"><rect x="8.6" y="8.4" width="6.8" height="6.8" fill="#e4ecf8" stroke="#44566e" stroke-width="1.1"/><path d="M13.8 9.9H10.6V13.2L11.7 12.1L13.1 13.7L14.1 12.8L12.6 11.2Z" fill="#15202e" transform="translate(0 0)"/></g></svg><div style="position:absolute;left:44px;top:365px;width:95.8px;height:21.5px;background:#d9d9d9"></div><svg style="position:absolute;left:31.5px;top:372.6px" width="6" height="10" viewBox="0 0 6 10"><path d="M.7 .7L4.3 4.5L.7 8.3" fill="none" stroke="#9a9a9a" stroke-width="1.5"/></svg><svg style="position:absolute;left:46.5px;top:367.5px" width="16" height="16" viewBox="0 0 16 16"><path d="M2.6 1.4H9.2L12.6 4.8V14.6H2.6Z" fill="#fbfdff" stroke="#a8905a" stroke-width="1.1"/><path d="M9 1.6V5H12.4Z" fill="#dcb65a"/><rect x="3.7" y="10" width="1.3" height="1.3" fill="#1f5a96"/><text x="5.1" y="11.4" font-family="Liberation Serif" font-size="10.5" font-weight="bold" fill="#1f5a96">c</text><g transform="translate(-.7 .3)"><rect x="8.6" y="8.4" width="6.8" height="6.8" fill="#e4ecf8" stroke="#44566e" stroke-width="1.1"/><path d="M13.8 9.9H10.6V13.2L11.7 12.1L13.1 13.7L14.1 12.8L12.6 11.2Z" fill="#15202e" transform="translate(0 0)"/></g></svg><svg style="position:absolute;left:31.5px;top:394.6px" width="6" height="10" viewBox="0 0 6 10"><path d="M.7 .7L4.3 4.5L.7 8.3" fill="none" stroke="#9a9a9a" stroke-width="1.5"/></svg><svg style="position:absolute;left:46.5px;top:389.5px" width="16" height="16" viewBox="0 0 16 16"><path d="M2.6 1.4H9.2L12.6 4.8V14.6H2.6Z" fill="#fbfdff" stroke="#a8905a" stroke-width="1.1"/><path d="M9 1.6V5H12.4Z" fill="#dcb65a"/><rect x="3.7" y="10" width="1.3" height="1.3" fill="#1f5a96"/><text x="5.1" y="11.4" font-family="Liberation Serif" font-size="10.5" font-weight="bold" fill="#1f5a96">h</text><g transform="translate(-.7 .3)"><rect x="8.6" y="8.4" width="6.8" height="6.8" fill="#e4ecf8" stroke="#44566e" stroke-width="1.1"/><path d="M13.8 9.9H10.6V13.2L11.7 12.1L13.1 13.7L14.1 12.8L12.6 11.2Z" fill="#15202e" transform="translate(0 0)"/></g></svg><svg style="position:absolute;left:46.5px;top:411.5px" width="16" height="16" viewBox="0 0 16 16"><path d="M.6 1.2H8.4L11.6 4.4V14.4H.6Z" fill="#e6edf8" stroke="#b3a47a" stroke-width="1"/><path d="M15.2 .8L3.4 13.6" stroke="#6b6b6b" stroke-width="1.6"/><path d="M3.8 15.4C5 12 8.6 8.6 11.6 7.4C12.6 9 10.6 13 6.8 15.4Z" fill="#f6c85a" stroke="#c48a1c" stroke-width=".8"/><path d="M2 15.6L5.6 11.4" stroke="#c48a1c" stroke-width="1.1"/></svg>
<div style="position:absolute;left:357px;top:48px;width:1560px;height:429px;border:1px solid #c0c6dc;border-radius:3px 0 0 0;background:#fff;box-sizing:border-box"></div><div style="position:absolute;left:358px;top:49px;width:1545px;height:28.5px;background:linear-gradient(#e9eefc,#dde2f1);border-radius:2px 0 0 0"></div><div style="position:absolute;left:358px;top:77px;width:1545px;height:1px;background:#bcc2da"></div><div style="position:absolute;left:625px;top:49px;width:121.5px;height:29px;background:#fff;border:1px solid #c3c9de;border-bottom:none;border-radius:5px 5px 0 0;box-sizing:border-box"></div><svg style="position:absolute;left:365px;top:57px" width="11" height="14" viewBox="0 0 11 14"><defs><linearGradient id="tg" x1="0" y1="0" x2="0" y2="1"><stop offset="0" stop-color="#c9b882"/><stop offset="1" stop-color="#8895b0"/></linearGradient></defs><path d="M.6 .6H7.4L10.4 3.6V13.4H.6Z" fill="#fff" stroke="url(#tg)" stroke-width="1.2"/><path d="M7.2 .8V3.8H10.2Z" fill="#d8bd6c"/><g stroke="#5a74ad" stroke-width="1" stroke-linecap="round"><path d="M2.4 3.5H5.6M2.4 5.5H8.6M2.4 7.5H8.6M2.4 9.5H8.6M2.4 11.5H6.6"/></g></svg><svg style="position:absolute;left:506px;top:57px" width="11" height="14" viewBox="0 0 11 14"><defs><linearGradient id="cg" x1="0" y1="0" x2="0" y2="1"><stop offset="0" stop-color="#b8923c"/><stop offset="1" stop-color="#7a6e46"/></linearGradient><linearGradient id="cf" x1="0" y1="0" x2="0" y2="1"><stop offset="0" stop-color="#fff"/><stop offset="1" stop-color="#dfeafb"/></linearGradient></defs><path d="M.6 .6H7.4L10.4 3.6V13.4H.6Z" fill="url(#cf)" stroke="url(#cg)" stroke-width="1.2"/><path d="M7.2 .8V3.8H10.2Z" fill="#dcb65a"/><rect x="2" y="10" width="1.3" height="1.3" fill="#1f5a96"/><text x="3.7" y="11.3" font-family="Liberation Serif" font-size="10.5" font-weight="bold" fill="#1f5a96">c</text></svg><svg style="position:absolute;left:632px;top:57px" width="11" height="14" viewBox="0 0 11 14"><defs><linearGradient id="cg" x1="0" y1="0" x2="0" y2="1"><stop offset="0" stop-color="#b8923c"/><stop offset="1" stop-color="#7a6e46"/></linearGradient><linearGradient id="cf" x1="0" y1="0" x2="0" y2="1"><stop offset="0" stop-color="#fff"/><stop offset="1" stop-color="#dfeafb"/></linearGradient></defs><path d="M.6 .6H7.4L10.4 3.6V13.4H.6Z" fill="url(#cf)" stroke="url(#cg)" stroke-width="1.2"/><path d="M7.2 .8V3.8H10.2Z" fill="#dcb65a"/><rect x="2" y="10" width="1.3" height="1.3" fill="#1f5a96"/><text x="3.7" y="11.3" font-family="Liberation Serif" font-size="10.5" font-weight="bold" fill="#1f5a96">c</text></svg><svg style="position:absolute;left:727.5px;top:59px" width="11" height="10" viewBox="0 0 11 10"><path d="M.7 .7H3L5.5 3.4L8 .7H10.3V2.2L7.4 5L10.3 7.8V9.3H8L5.5 6.6L3 9.3H.7V7.8L3.6 5L.7 2.2Z" fill="#fff" stroke="#666" stroke-width=".9" stroke-linejoin="round"/></svg><svg style="position:absolute;left:1871px;top:56px" width="11" height="5" viewBox="0 0 11 5"><rect x=".6" y=".6" width="9.2" height="2.9" fill="#fff" stroke="#6a6a6a" stroke-width="1.15"/></svg><svg style="position:absolute;left:1894px;top:56px" width="11" height="11" viewBox="0 0 11 11"><rect x=".6" y=".6" width="9.3" height="9" fill="#fff" stroke="#6a6a6a" stroke-width="1.15"/><path d="M.6 2.3H9.9" stroke="#6a6a6a" stroke-width="1.1"/></svg><div style="position:absolute;left:359px;top:79px;width:12px;height:396px;background:#f8f8f8"></div><div style="position:absolute;left:389px;top:79px;width:1px;height:376px;background:#f6f6f6"></div><div style="position:absolute;left:1882px;top:78.5px;width:20px;height:376px;background:#f0f0f0"></div><div style="position:absolute;left:1882px;top:169.8px;width:19px;height:93.2px;background:#cdcdcd"></div><svg style="position:absolute;left:1886px;top:86px" width="11" height="7" viewBox="0 0 11 7"><path d="M1 6L5.5 1.5L10 6" fill="none" stroke="#505050" stroke-width="1.8"/></svg><svg style="position:absolute;left:1886px;top:439.5px" width="11" height="7" viewBox="0 0 11 7"><path d="M1 1L5.5 5.5L10 1" fill="none" stroke="#505050" stroke-width="1.8"/></svg><div style="position:absolute;left:371px;top:454.5px;width:19px;height:20.5px;background:#f8f8f8"></div><div style="position:absolute;left:390px;top:454.5px;width:1513px;height:20.5px;background:#f0f0f0"></div><svg style="position:absolute;left:396.5px;top:459.5px" width="7" height="11" viewBox="0 0 7 11"><path d="M6 1L1.5 5.5L6 10" fill="none" stroke="#bdbdbd" stroke-width="1.6"/></svg><svg style="position:absolute;left:1866.5px;top:459.5px" width="7" height="11" viewBox="0 0 7 11"><path d="M1 1L5.5 5.5L1 10" fill="none" stroke="#bdbdbd" stroke-width="1.6"/></svg><svg style="position:absolute;left:590px;top:256px" width="28" height="3" viewBox="0 0 28 3"><g fill="#ff7a48" shape-rendering="crispEdges"><rect x="0" y="2" width="1" height="1"/><rect x="1" y="1" width="1" height="1"/><rect x="2" y="0" width="1" height="1"/><rect x="3" y="1" width="1" height="1"/><rect x="4" y="2" width="1" height="1"/><rect x="5" y="1" width="1" height="1"/><rect x="6" y="0" width="1" height="1"/><rect x="7" y="1" width="1" height="1"/><rect x="8" y="2" width="1" height="1"/><rect x="9" y="1" width="1" height="1"/><rect x="10" y="0" width="1" height="1"/><rect x="11" y="1" width="1" height="1"/><rect x="12" y="2" width="1" height="1"/><rect x="13" y="1" width="1" height="1"/><rect x="14" y="0" width="1" height="1"/><rect x="15" y="1" width="1" height="1"/><rect x="16" y="2" width="1" height="1"/><rect x="17" y="1" width="1" height="1"/><rect x="18" y="0" width="1" height="1"/><rect x="19" y="1" width="1" height="1"/><rect x="20" y="2" width="1" height="1"/><rect x="21" y="1" width="1" height="1"/><rect x="22" y="0" width="1" height="1"/><rect x="23" y="1" width="1" height="1"/><rect x="24" y="2" width="1" height="1"/><rect x="25" y="1" width="1" height="1"/><rect x="26" y="0" width="1" height="1"/><rect x="27" y="1" width="1" height="1"/></g></svg>
<div style="position:absolute;left:358.5px;top:78.5px;width:1523.5px;height:376px;overflow:hidden"><div class="ln" style="top:3.70px">15</div><div class="cl" style="top:4.73px"></div><div class="ln" style="top:23.70px">16</div><div class="cl" style="top:24.73px"><span style="color:#3f7f5f">//</span></div><div class="ln" style="top:43.70px">17</div><div class="cl" style="top:44.73px"><span style="color:#3f7f5f">// Includes</span></div><div class="ln" style="top:63.70px">18</div><div class="cl" style="top:64.73px"><span style="color:#3f7f5f">//</span></div><div class="ln" style="top:83.70px">19</div><div class="cl" style="top:84.73px"><span style="color:#7f0055;font-weight:bold">#include</span> <span style="color:#2a00ff">&quot;CLAmath.h&quot;</span></div><div class="ln" style="top:103.70px">20</div><div class="cl" style="top:104.73px"><span style="color:#7f0055;font-weight:bold">#include</span> <span style="color:#2a00ff">&quot;cla_shared.h&quot;</span></div><div class="ln" style="top:123.70px">21</div><div class="cl" style="top:124.73px"></div><div class="ln" style="top:143.70px">22</div><div class="cl" style="top:144.73px"><span style="color:#3f7f5f">//</span></div><div class="ln" style="top:163.70px">23</div><div class="cl" style="top:164.73px"><span style="color:#3f7f5f">// Task 1 : Calculate </span><span style="color:#3f7f5f">cos</span><span style="color:#3f7f5f">(X)</span></div><div class="ln" style="top:183.70px">24</div><div class="cl" style="top:184.73px"><span style="color:#3f7f5f">//</span></div><div class="ln" style="top:203.70px">25</div><div class="cl" style="top:204.73px"><span style="color:#7f0055;font-weight:bold">__attribute__</span>((<span style="color:#7f0055;font-weight:bold">interrupt</span>)) <span style="color:#7f0055;font-weight:bold">void</span> <span style="color:#000;font-weight:bold">Cla1Task1</span>(<span style="color:#7f0055;font-weight:bold">void</span>)</div><div class="ln" style="top:223.70px">26</div><div class="cl" style="top:224.73px">{</div><div class="ln" style="top:243.70px">27</div><div class="cl" style="top:244.73px">    __mdebugstop();</div><div class="ln" style="top:263.70px">28</div><div class="cl" style="top:264.73px">    fResult1 = <span style="color:#642880;font-weight:bold">CLAcos</span>(fVal);</div><div class="ln" style="top:283.70px">29</div><div class="cl" style="top:284.73px">}</div><div class="ln" style="top:303.70px">30</div><div class="cl" style="top:304.73px"><span style="color:#7f0055;font-weight:bold">__attribute__</span>((<span style="color:#7f0055;font-weight:bold">interrupt</span>)) <span style="color:#7f0055;font-weight:bold">void</span> <span style="color:#000;font-weight:bold">Cla1Task2</span>(<span style="color:#7f0055;font-weight:bold">void</span>)</div><div class="ln" style="top:323.70px">31</div><div class="cl" style="top:324.73px">{</div><div class="ln" style="top:343.70px">32</div><div class="cl" style="top:344.73px">    <span style="color:#3f7f5f">//</span></div><div class="ln" style="top:363.70px">33</div><div class="cl" style="top:364.73px">    <span style="color:#3f7f5f">// Test inline function</span></div></div>
<div style="position:absolute;left:357px;top:481px;width:540px;height:410px;border:1px solid #e6e6e6;border-radius:4px 4px 0 0;background:#fff;box-sizing:border-box"></div><div style="position:absolute;left:358px;top:482px;width:538px;height:28.5px;background:linear-gradient(#f9f9f9,#efefef);border-radius:5px 5px 0 0"></div><div style="position:absolute;left:358px;top:510px;width:538px;height:1px;background:#e4e4e4"></div><div style="position:absolute;left:358px;top:482px;width:105.5px;height:29.5px;background:#fff;border-radius:5px 5px 0 0;border-right:1px solid #e2e2e2;box-sizing:border-box"></div><svg style="position:absolute;left:363.5px;top:490.5px" width="13.5" height="12.5" viewBox="0 0 16 16"><rect x="1.2" y="1.2" width="13.6" height="10.6" rx="2" fill="#fdfeff" stroke="#2f62b5" stroke-width="2.2"/><rect x="4" y="4.5" width="6" height="1.2" fill="#3d6dbb"/><rect x="4" y="7" width="8" height="1.2" fill="#3d6dbb"/><rect x="6.5" y="12.5" width="3" height="1.5" fill="#2f62b5"/><rect x="3" y="13.8" width="10" height="1.6" rx=".5" fill="#3a6bbd"/></svg><svg style="position:absolute;left:445.5px;top:492.5px" width="11" height="10" viewBox="0 0 11 10"><path d="M.7 .7H3L5.5 3.4L8 .7H10.3V2.2L7.4 5L10.3 7.8V9.3H8L5.5 6.6L3 9.3H.7V7.8L3.6 5L.7 2.2Z" fill="#fff" stroke="#666" stroke-width=".9" stroke-linejoin="round"/></svg><svg style="position:absolute;left:742.3px;top:486.2px" width="16" height="16" viewBox="0 0 16 16"><rect x=".8" y="5.2" width="12" height="9.6" fill="#ececec" stroke="#c6c6c6" stroke-width="1"/><rect x=".8" y="5.2" width="12" height="2" fill="#bdbdbd"/><path d="M6.6 10.4L11.4 4.6" stroke="#a8a8a8" stroke-width="1.6"/><path d="M8.4 8.2L9.8 9.4" stroke="#bdbdbd" stroke-width="1"/><circle cx="12.4" cy="3.4" r="2.3" fill="#b4b4b4"/><circle cx="11.8" cy="2.8" r=".8" fill="#dadada"/></svg><svg style="position:absolute;left:767px;top:487.2px" width="13" height="13" viewBox="0 0 16 16"><rect x="1.2" y="1.2" width="13.6" height="10.6" rx="2" fill="#f4f4f4" stroke="#9c9c9c" stroke-width="2.2"/><rect x="4" y="4.5" width="6" height="1.2" fill="#a8a8a8"/><rect x="4" y="7" width="8" height="1.2" fill="#a8a8a8"/><rect x="6.5" y="12.5" width="3" height="1.5" fill="#9c9c9c"/><rect x="3" y="13.8" width="10" height="1.6" rx=".5" fill="#9c9c9c"/></svg><svg style="position:absolute;left:788.5px;top:491.5px" width="10" height="6" viewBox="0 0 10 6"><path d="M0 0H10L5 5.6Z" fill="#7a7a7a"/></svg><svg style="position:absolute;left:807.6px;top:485.6px" width="16" height="16" viewBox="0 0 16 16"><rect x=".8" y="3.6" width="13.2" height="11.6" fill="#f2f8ff" stroke="#a3925c" stroke-width="1.1"/><rect x=".8" y="3.6" width="13.2" height="2.6" fill="#3f8be0"/><path d="M14 9.4C13.4 12.4 11 14.6 6.6 15.2H14Z" fill="#f6df9a"/><path d="M12.20 0.80L13.54 2.96L15.70 4.30L13.54 5.64L12.20 7.80L10.86 5.64L8.70 4.30L10.86 2.96Z" fill="#fffef2" stroke="#d9a326" stroke-width="1.1" stroke-linejoin="round"/></svg><svg style="position:absolute;left:830.5px;top:491.5px" width="10" height="6" viewBox="0 0 10 6"><path d="M0 0H10L5 5.6Z" fill="#000"/></svg><svg style="position:absolute;left:850.5px;top:489px" width="11" height="5" viewBox="0 0 11 5"><rect x=".6" y=".6" width="9.2" height="2.9" fill="#fff" stroke="#6a6a6a" stroke-width="1.15"/></svg><svg style="position:absolute;left:873.5px;top:489px" width="11" height="11" viewBox="0 0 11 11"><rect x=".6" y=".6" width="9.3" height="9" fill="#fff" stroke="#6a6a6a" stroke-width="1.15"/><path d="M.6 2.3H9.9" stroke="#6a6a6a" stroke-width="1.1"/></svg><div style="position:absolute;left:359px;top:531px;width:537px;height:1px;background:#8a8a8a"></div>
<div style="position:absolute;left:901px;top:481px;width:1010px;height:410px;border:1px solid #e6e6e6;border-radius:4px 0 0 0;background:#fff;box-sizing:border-box"></div><div style="position:absolute;left:902px;top:482px;width:1001px;height:28.5px;background:linear-gradient(#f9f9f9,#efefef);border-radius:5px 0 0 0"></div><div style="position:absolute;left:902px;top:510px;width:1001px;height:1px;background:#e4e4e4"></div><div style="position:absolute;left:902px;top:482px;width:114.5px;height:29.5px;background:#fff;border-radius:5px 5px 0 0;border-right:1px solid #e2e2e2;box-sizing:border-box"></div><svg style="position:absolute;left:905.5px;top:489px" width="15" height="15" viewBox="0 0 16 16"><rect x="3" y=".8" width="9.6" height="11.4" fill="#f4f4fa" stroke="#8d93b8" stroke-width="1"/><path d="M9.4 1V12M11 4V15M11 15H14.6" stroke="#8d93b8" stroke-width="1"/><circle cx="6" cy="4" r="2.7" fill="#e8323c" stroke="#b31c28" stroke-width=".6"/><path d="M3.6 8.6L.6 15.2H6.8Z" fill="#f8c04a" stroke="#c88a18" stroke-width=".8" stroke-linejoin="round"/><rect x="3.2" y="10.8" width=".9" height="2.4" fill="#222"/><rect x="3.2" y="13.6" width=".9" height=".8" fill="#222"/></svg><svg style="position:absolute;left:998.5px;top:492.5px" width="11" height="10" viewBox="0 0 11 10"><path d="M.7 .7H3L5.5 3.4L8 .7H10.3V2.2L7.4 5L10.3 7.8V9.3H8L5.5 6.6L3 9.3H.7V7.8L3.6 5L.7 2.2Z" fill="#fff" stroke="#666" stroke-width=".9" stroke-linejoin="round"/></svg><svg style="position:absolute;left:1023.3px;top:489.4px" width="10.8" height="15.4" viewBox="2 0 9 16"><path d="M5.2 10.4C5.2 8.6 2.6 7.4 2.6 4.6C2.6 2.2 4.6 .7 6.5 .7C8.4 .7 10.4 2.2 10.4 4.6C10.4 7.4 7.8 8.6 7.8 10.4Z" fill="#fff3b8" stroke="#dba43a" stroke-width="1"/><path d="M4.6 11.4H8.4V14C8.4 14.8 7.6 15.4 6.5 15.4C5.4 15.4 4.6 14.8 4.6 14Z" fill="#a9b4c8" stroke="#6f7d98" stroke-width=".8"/><path d="M5 4C5.4 3 6.4 2.4 7.4 2.6" stroke="#fff" stroke-width="1" fill="none"/></svg><svg style="position:absolute;left:1097.5px;top:489.3px" width="16.5" height="15.5" viewBox="0 0 16 16"><path d="M.4 15.6L6.4 7L11.4 11.4L3.6 15.8Z" fill="#fff6c4"/><path d="M2.6 13L8 5.8L12.2 9.6L5.4 14.4Z" fill="#f8dc84" stroke="#e6bc52" stroke-width=".6"/><path d="M.6 15.6L3.6 11.4L6.4 13.8Z" fill="#fffdf0"/><path d="M6 7.4L9.2 3.8L13.2 7.4L10 11Z" fill="#a3a0a0" stroke="#747070" stroke-width=".6"/><path d="M9.2 3.8L12 .8L15.6 2.2L15.7 5L13.2 7.4Z" fill="#f3c964" stroke="#c98d26" stroke-width=".8" stroke-linejoin="round"/><circle cx="12.9" cy="3.2" r=".9" fill="#355c9c"/></svg><svg style="position:absolute;left:1819px;top:486.5px" width="16" height="16" viewBox="0 0 16 16"><g stroke="#4a86b4" stroke-width="1"><path d="M0 3.1H5.4M0 13H5.4"/></g><g fill="#3f6f96"><path d="M4.8 .8L7.8 3.1L4.8 5.4Z"/><path d="M4.8 10.7L7.8 13L4.8 15.3Z"/></g><g stroke="#2c3f6c" stroke-width="1"><path d="M9.6 .4V5.4M9.6 10.4V15.6"/></g><path d="M4.4 6.8H11.4V4.8L15.8 8L11.4 11.2V9.2H4.4Z" fill="#fff6d2" stroke="#c8861a" stroke-width="1" stroke-linejoin="round"/></svg><svg style="position:absolute;left:1850.5px;top:488.8px" width="11" height="6" viewBox="0 0 11 6"><path d="M.8 .6H10.2L5.5 5.2Z" fill="#fff" stroke="#6a6a6a" stroke-width="1"/></svg><svg style="position:absolute;left:1871px;top:489px" width="11" height="5" viewBox="0 0 11 5"><rect x=".6" y=".6" width="9.2" height="2.9" fill="#fff" stroke="#6a6a6a" stroke-width="1.15"/></svg><svg style="position:absolute;left:1894px;top:489px" width="11" height="11" viewBox="0 0 11 11"><rect x=".6" y=".6" width="9.3" height="9" fill="#fff" stroke="#6a6a6a" stroke-width="1.15"/><path d="M.6 2.3H9.9" stroke="#6a6a6a" stroke-width="1.1"/></svg><div style="position:absolute;left:903px;top:531px;width:1001px;height:1px;background:#8a8a8a"></div><div style="position:absolute;left:903px;top:558px;width:1000px;height:330px;background:#f6f6f6"></div><div style="position:absolute;left:903px;top:579px;width:1000px;height:1px;background:#e8e8e8"></div><div style="position:absolute;left:903px;top:601px;width:1000px;height:1px;background:#e8e8e8"></div><div style="position:absolute;left:903px;top:623px;width:1000px;height:1px;background:#e8e8e8"></div><div style="position:absolute;left:903px;top:645px;width:1000px;height:1px;background:#e8e8e8"></div><div style="position:absolute;left:903px;top:667px;width:1000px;height:1px;background:#e8e8e8"></div><div style="position:absolute;left:903px;top:689px;width:1000px;height:1px;background:#e8e8e8"></div><div style="position:absolute;left:903px;top:711px;width:1000px;height:1px;background:#e8e8e8"></div><div style="position:absolute;left:903px;top:733px;width:1000px;height:1px;background:#e8e8e8"></div><div style="position:absolute;left:903px;top:755px;width:1000px;height:1px;background:#e8e8e8"></div><div style="position:absolute;left:903px;top:777px;width:1000px;height:1px;background:#e8e8e8"></div><div style="position:absolute;left:903px;top:799px;width:1000px;height:1px;background:#e8e8e8"></div><div style="position:absolute;left:903px;top:821px;width:1000px;height:1px;background:#e8e8e8"></div><div style="position:absolute;left:903px;top:843px;width:1000px;height:1px;background:#e8e8e8"></div><div style="position:absolute;left:903px;top:865px;width:1000px;height:1px;background:#e8e8e8"></div><div style="position:absolute;left:903px;top:887px;width:1000px;height:1px;background:#e8e8e8"></div><div style="position:absolute;left:903px;top:909px;width:1000px;height:1px;background:#e8e8e8"></div><svg style="position:absolute;left:908.5px;top:567.3px" width="10" height="6" viewBox="0 0 10 6"><path d="M.8 .8L5 4.8L9.2 .8" fill="none" stroke="#404040" stroke-width="1.7"/></svg><svg style="position:absolute;left:928.5px;top:561.5px" width="11" height="11" viewBox="0 0 13 12"><path d="M5.5 1.2C6 .4 7 .4 7.5 1.2L12.2 9.6C12.7 10.5 12.2 11.4 11.2 11.4H1.8C.8 11.4 .3 10.5 .8 9.6Z" fill="#f9c14e" stroke="#d99a2a" stroke-width=".9"/><path d="M6.5 2.2L10.8 10H2.2Z" fill="#fbd477" opacity=".6"/><rect x="5.8" y="3.6" width="1.5" height="4" rx=".3" fill="#3a2a10"/><rect x="5.8" y="8.4" width="1.5" height="1.5" rx=".3" fill="#3a2a10"/></svg>
<svg style="position:absolute;left:948.5px;top:583.5px" width="11" height="11" viewBox="0 0 13 12"><path d="M5.5 1.2C6 .4 7 .4 7.5 1.2L12.2 9.6C12.7 10.5 12.2 11.4 11.2 11.4H1.8C.8 11.4 .3 10.5 .8 9.6Z" fill="#f9c14e" stroke="#d99a2a" stroke-width=".9"/><path d="M6.5 2.2L10.8 10H2.2Z" fill="#fbd477" opacity=".6"/><rect x="5.8" y="3.6" width="1.5" height="4" rx=".3" fill="#3a2a10"/><rect x="5.8" y="8.4" width="1.5" height="1.5" rx=".3" fill="#3a2a10"/></svg><svg style="position:absolute;left:948.5px;top:605.5px" width="11" height="11" viewBox="0 0 13 12"><path d="M5.5 1.2C6 .4 7 .4 7.5 1.2L12.2 9.6C12.7 10.5 12.2 11.4 11.2 11.4H1.8C.8 11.4 .3 10.5 .8 9.6Z" fill="#f9c14e" stroke="#d99a2a" stroke-width=".9"/><path d="M6.5 2.2L10.8 10H2.2Z" fill="#fbd477" opacity=".6"/><rect x="5.8" y="3.6" width="1.5" height="4" rx=".3" fill="#3a2a10"/><rect x="5.8" y="8.4" width="1.5" height="1.5" rx=".3" fill="#3a2a10"/></svg><svg style="position:absolute;left:948.5px;top:627.5px" width="11" height="11" viewBox="0 0 13 12"><path d="M5.5 1.2C6 .4 7 .4 7.5 1.2L12.2 9.6C12.7 10.5 12.2 11.4 11.2 11.4H1.8C.8 11.4 .3 10.5 .8 9.6Z" fill="#f9c14e" stroke="#d99a2a" stroke-width=".9"/><path d="M6.5 2.2L10.8 10H2.2Z" fill="#fbd477" opacity=".6"/><rect x="5.8" y="3.6" width="1.5" height="4" rx=".3" fill="#3a2a10"/><rect x="5.8" y="8.4" width="1.5" height="1.5" rx=".3" fill="#3a2a10"/></svg><svg style="position:absolute;left:948.5px;top:649.5px" width="11" height="11" viewBox="0 0 13 12"><path d="M5.5 1.2C6 .4 7 .4 7.5 1.2L12.2 9.6C12.7 10.5 12.2 11.4 11.2 11.4H1.8C.8 11.4 .3 10.5 .8 9.6Z" fill="#f9c14e" stroke="#d99a2a" stroke-width=".9"/><path d="M6.5 2.2L10.8 10H2.2Z" fill="#fbd477" opacity=".6"/><rect x="5.8" y="3.6" width="1.5" height="4" rx=".3" fill="#3a2a10"/><rect x="5.8" y="8.4" width="1.5" height="1.5" rx=".3" fill="#3a2a10"/></svg><svg style="position:absolute;left:948.5px;top:671.5px" width="11" height="11" viewBox="0 0 13 12"><path d="M5.5 1.2C6 .4 7 .4 7.5 1.2L12.2 9.6C12.7 10.5 12.2 11.4 11.2 11.4H1.8C.8 11.4 .3 10.5 .8 9.6Z" fill="#f9c14e" stroke="#d99a2a" stroke-width=".9"/><path d="M6.5 2.2L10.8 10H2.2Z" fill="#fbd477" opacity=".6"/><rect x="5.8" y="3.6" width="1.5" height="4" rx=".3" fill="#3a2a10"/><rect x="5.8" y="8.4" width="1.5" height="1.5" rx=".3" fill="#3a2a10"/></svg><svg style="position:absolute;left:948.5px;top:693.5px" width="11" height="11" viewBox="0 0 13 12"><path d="M5.5 1.2C6 .4 7 .4 7.5 1.2L12.2 9.6C12.7 10.5 12.2 11.4 11.2 11.4H1.8C.8 11.4 .3 10.5 .8 9.6Z" fill="#f9c14e" stroke="#d99a2a" stroke-width=".9"/><path d="M6.5 2.2L10.8 10H2.2Z" fill="#fbd477" opacity=".6"/><rect x="5.8" y="3.6" width="1.5" height="4" rx=".3" fill="#3a2a10"/><rect x="5.8" y="8.4" width="1.5" height="1.5" rx=".3" fill="#3a2a10"/></svg><svg style="position:absolute;left:948.5px;top:715.5px" width="11" height="11" viewBox="0 0 13 12"><path d="M5.5 1.2C6 .4 7 .4 7.5 1.2L12.2 9.6C12.7 10.5 12.2 11.4 11.2 11.4H1.8C.8 11.4 .3 10.5 .8 9.6Z" fill="#f9c14e" stroke="#d99a2a" stroke-width=".9"/><path d="M6.5 2.2L10.8 10H2.2Z" fill="#fbd477" opacity=".6"/><rect x="5.8" y="3.6" width="1.5" height="4" rx=".3" fill="#3a2a10"/><rect x="5.8" y="8.4" width="1.5" height="1.5" rx=".3" fill="#3a2a10"/></svg><svg style="position:absolute;left:948.5px;top:737.5px" width="11" height="11" viewBox="0 0 13 12"><path d="M5.5 1.2C6 .4 7 .4 7.5 1.2L12.2 9.6C12.7 10.5 12.2 11.4 11.2 11.4H1.8C.8 11.4 .3 10.5 .8 9.6Z" fill="#f9c14e" stroke="#d99a2a" stroke-width=".9"/><path d="M6.5 2.2L10.8 10H2.2Z" fill="#fbd477" opacity=".6"/><rect x="5.8" y="3.6" width="1.5" height="4" rx=".3" fill="#3a2a10"/><rect x="5.8" y="8.4" width="1.5" height="1.5" rx=".3" fill="#3a2a10"/></svg><svg style="position:absolute;left:948.5px;top:759.5px" width="11" height="11" viewBox="0 0 13 12"><path d="M5.5 1.2C6 .4 7 .4 7.5 1.2L12.2 9.6C12.7 10.5 12.2 11.4 11.2 11.4H1.8C.8 11.4 .3 10.5 .8 9.6Z" fill="#f9c14e" stroke="#d99a2a" stroke-width=".9"/><path d="M6.5 2.2L10.8 10H2.2Z" fill="#fbd477" opacity=".6"/><rect x="5.8" y="3.6" width="1.5" height="4" rx=".3" fill="#3a2a10"/><rect x="5.8" y="8.4" width="1.5" height="1.5" rx=".3" fill="#3a2a10"/></svg><svg style="position:absolute;left:948.5px;top:781.5px" width="11" height="11" viewBox="0 0 13 12"><path d="M5.5 1.2C6 .4 7 .4 7.5 1.2L12.2 9.6C12.7 10.5 12.2 11.4 11.2 11.4H1.8C.8 11.4 .3 10.5 .8 9.6Z" fill="#f9c14e" stroke="#d99a2a" stroke-width=".9"/><path d="M6.5 2.2L10.8 10H2.2Z" fill="#fbd477" opacity=".6"/><rect x="5.8" y="3.6" width="1.5" height="4" rx=".3" fill="#3a2a10"/><rect x="5.8" y="8.4" width="1.5" height="1.5" rx=".3" fill="#3a2a10"/></svg><svg style="position:absolute;left:948.5px;top:803.5px" width="11" height="11" viewBox="0 0 13 12"><path d="M5.5 1.2C6 .4 7 .4 7.5 1.2L12.2 9.6C12.7 10.5 12.2 11.4 11.2 11.4H1.8C.8 11.4 .3 10.5 .8 9.6Z" fill="#f9c14e" stroke="#d99a2a" stroke-width=".9"/><path d="M6.5 2.2L10.8 10H2.2Z" fill="#fbd477" opacity=".6"/><rect x="5.8" y="3.6" width="1.5" height="4" rx=".3" fill="#3a2a10"/><rect x="5.8" y="8.4" width="1.5" height="1.5" rx=".3" fill="#3a2a10"/></svg><svg style="position:absolute;left:948.5px;top:825.5px" width="11" height="11" viewBox="0 0 13 12"><path d="M5.5 1.2C6 .4 7 .4 7.5 1.2L12.2 9.6C12.7 10.5 12.2 11.4 11.2 11.4H1.8C.8 11.4 .3 10.5 .8 9.6Z" fill="#f9c14e" stroke="#d99a2a" stroke-width=".9"/><path d="M6.5 2.2L10.8 10H2.2Z" fill="#fbd477" opacity=".6"/><rect x="5.8" y="3.6" width="1.5" height="4" rx=".3" fill="#3a2a10"/><rect x="5.8" y="8.4" width="1.5" height="1.5" rx=".3" fill="#3a2a10"/></svg><svg style="position:absolute;left:948.5px;top:847.5px" width="11" height="11" viewBox="0 0 13 12"><path d="M5.5 1.2C6 .4 7 .4 7.5 1.2L12.2 9.6C12.7 10.5 12.2 11.4 11.2 11.4H1.8C.8 11.4 .3 10.5 .8 9.6Z" fill="#f9c14e" stroke="#d99a2a" stroke-width=".9"/><path d="M6.5 2.2L10.8 10H2.2Z" fill="#fbd477" opacity=".6"/><rect x="5.8" y="3.6" width="1.5" height="4" rx=".3" fill="#3a2a10"/><rect x="5.8" y="8.4" width="1.5" height="1.5" rx=".3" fill="#3a2a10"/></svg>
<span class="t" style="left:1746.40px;top:17.80px;color:#6b6b6b;letter-spacing:-0.114px;">Quick Access</span>
<span class="t" style="left:25.00px;top:56.10px;letter-spacing:0.153px;">Project Explorer</span>
<span class="t" style="left:47.30px;top:81.90px;letter-spacing:-0.343px;">cla_acos</span>
<span class="t" style="left:47.30px;top:103.90px;letter-spacing:0.157px;-webkit-text-stroke:.45px #000;">cla_cos</span>
<span class="t" style="left:66.60px;top:125.90px;letter-spacing:0.187px;">Binaries</span>
<span class="t" style="left:66.60px;top:147.90px;letter-spacing:0.362px;">Includes</span>
<span class="t" style="left:67.60px;top:169.90px;letter-spacing:0.404px;">f28004x</span>
<span class="t" style="left:67.60px;top:191.90px;letter-spacing:0.353px;">f2805x</span>
<span class="t" style="left:67.60px;top:213.90px;letter-spacing:0.176px;">f2805x_RAM</span>
<span class="t" style="left:67.60px;top:235.90px;letter-spacing:0.353px;">f2806x</span>
<span class="t" style="left:67.60px;top:257.90px;letter-spacing:0.353px;">f2807x</span>
<span class="t" style="left:67.60px;top:279.90px;letter-spacing:0.353px;">f2837x</span>
<span class="t" style="left:67.60px;top:301.90px;letter-spacing:0.353px;">f2838x</span>
<span class="t" style="left:67.60px;top:323.90px;letter-spacing:-0.063px;">f2838x_FLASH</span>
<span class="t" style="left:67.60px;top:345.90px;letter-spacing:-0.460px;">c28x_cos.c</span>
<span class="t" style="left:67.60px;top:367.90px;letter-spacing:-0.506px;">cla_cos.cla</span>
<span class="t" style="left:67.60px;top:389.90px;letter-spacing:-0.059px;">cla_shared.h</span>
<span class="t" style="left:67.60px;top:411.90px;color:#8a8a8a;letter-spacing:0.142px;">2838x_flash_lnk_cpu1.cmd</span>
<span class="t" style="left:107.00px;top:103.90px;color:#a68c52;letter-spacing:0.474px;">[Active - f2838x_FLASH]</span>
<span class="t" style="left:381.50px;top:56.10px;letter-spacing:-0.092px;">cla_acos.map</span>
<span class="t" style="left:522.60px;top:56.10px;letter-spacing:0.126px;">CLAmath.h</span>
<span class="t" style="left:648.70px;top:56.10px;letter-spacing:-0.386px;">cla_cos.cla</span>
<span class="t" style="left:381.90px;top:489.30px;letter-spacing:0.235px;">Console</span>
<span class="t" style="left:359.40px;top:513.90px;letter-spacing:0.309px;">No consoles to display at this time.</span>
<span class="t" style="left:925.10px;top:489.30px;letter-spacing:0.464px;">Problems</span>
<span class="t" style="left:1040.30px;top:489.30px;letter-spacing:0.604px;">Advice</span>
<span class="t" style="left:1117.70px;top:489.30px;letter-spacing:-0.177px;">Search</span>
<span class="t" style="left:903.00px;top:514.30px;letter-spacing:0.316px;">0 errors, 13 warnings, 0 others</span>
<span class="t" style="left:908.70px;top:538.30px;letter-spacing:0.431px;">Description</span>
<span class="t" style="left:946.90px;top:561.30px;letter-spacing:0.458px;">Warnings (13 items)</span>
<span class="t" style="left:967.20px;top:583.30px;letter-spacing:0.764px;">#10015-D</span>
<span class="t" style="left:1043.90px;top:583.30px;letter-spacing:0.199px;">output file "cla_cos.out"</span>
<span class="t" style="left:1210.10px;top:583.30px;letter-spacing:0.391px;">cannot be loaded and run</span>
<span class="t" style="left:1394.90px;top:583.30px;letter-spacing:0.218px;">on a target system</span>
<span class="t" style="left:967.20px;top:605.30px;color:#1a6fd6;letter-spacing:0.793px;text-decoration:underline;text-decoration-thickness:1px;text-underline-offset:2px">#17003-D</span>
<span class="t" style="left:1046.90px;top:605.30px;letter-spacing:0.660px;">/home/ubnuser/ti/repos/c2000ware</span>
<span class="t" style="left:1299.00px;top:605.30px;letter-spacing:0.544px;">/internal/repos/c2000ware</span>
<span class="t" style="left:1485.20px;top:605.30px;letter-spacing:0.641px;">/libraries/math/temp/source</span>
<span class="t" style="left:1683.40px;top:605.30px;letter-spacing:0.037px;">/CLAcos.asm:</span>
<span class="t" style="left:1779.70px;top:605.30px;letter-spacing:0.542px;">relocation from as</span>
<span class="t" style="left:967.20px;top:627.30px;color:#1a6fd6;letter-spacing:0.793px;text-decoration:underline;text-decoration-thickness:1px;text-underline-offset:2px">#17003-D</span>
<span class="t" style="left:1046.90px;top:627.30px;letter-spacing:0.660px;">/home/ubnuser/ti/repos/c2000ware</span>
<span class="t" style="left:1299.00px;top:627.30px;letter-spacing:0.544px;">/internal/repos/c2000ware</span>
<span class="t" style="left:1485.20px;top:627.30px;letter-spacing:0.641px;">/libraries/math/temp/source</span>
<span class="t" style="left:1683.40px;top:627.30px;letter-spacing:0.037px;">/CLAcos.asm:</span>
<span class="t" style="left:1779.70px;top:627.30px;letter-spacing:0.542px;">relocation from as</span>
<span class="t" style="left:967.20px;top:649.30px;color:#1a6fd6;letter-spacing:0.793px;text-decoration:underline;text-decoration-thickness:1px;text-underline-offset:2px">#17003-D</span>
<span class="t" style="left:1046.90px;top:649.30px;letter-spacing:0.660px;">/home/ubnuser/ti/repos/c2000ware</span>
<span class="t" style="left:1299.00px;top:649.30px;letter-spacing:0.544px;">/internal/repos/c2000ware</span>
<span class="t" style="left:1485.20px;top:649.30px;letter-spacing:0.641px;">/libraries/math/temp/source</span>
<span class="t" style="left:1683.40px;top:649.30px;letter-spacing:0.037px;">/CLAcos.asm:</span>
<span class="t" style="left:1779.70px;top:649.30px;letter-spacing:0.542px;">relocation from as</span>
<span class="t" style="left:967.20px;top:671.30px;color:#1a6fd6;letter-spacing:0.793px;text-decoration:underline;text-decoration-thickness:1px;text-underline-offset:2px">#17003-D</span>
<span class="t" style="left:1046.90px;top:671.30px;letter-spacing:0.660px;">/home/ubnuser/ti/repos/c2000ware</span>
<span class="t" style="left:1299.00px;top:671.30px;letter-spacing:0.544px;">/internal/repos/c2000ware</span>
<span class="t" style="left:1485.20px;top:671.30px;letter-spacing:0.641px;">/libraries/math/temp/source</span>
<span class="t" style="left:1683.40px;top:671.30px;letter-spacing:0.037px;">/CLAcos.asm:</span>
<span class="t" style="left:1779.70px;top:671.30px;letter-spacing:0.542px;">relocation from as</span>
<span class="t" style="left:967.20px;top:693.30px;color:#1a6fd6;letter-spacing:0.793px;text-decoration:underline;text-decoration-thickness:1px;text-underline-offset:2px">#17003-D</span>
<span class="t" style="left:1046.90px;top:693.30px;letter-spacing:0.660px;">/home/ubnuser/ti/repos/c2000ware</span>
<span class="t" style="left:1299.00px;top:693.30px;letter-spacing:0.544px;">/internal/repos/c2000ware</span>
<span class="t" style="left:1485.20px;top:693.30px;letter-spacing:0.641px;">/libraries/math/temp/source</span>
<span class="t" style="left:1683.40px;top:693.30px;letter-spacing:0.037px;">/CLAcos.asm:</span>
<span class="t" style="left:1779.70px;top:693.30px;letter-spacing:0.542px;">relocation from as</span>
<span class="t" style="left:967.20px;top:715.30px;color:#1a6fd6;letter-spacing:0.793px;text-decoration:underline;text-decoration-thickness:1px;text-underline-offset:2px">#17003-D</span>
<span class="t" style="left:1046.90px;top:715.30px;letter-spacing:0.660px;">/home/ubnuser/ti/repos/c2000ware</span>
<span class="t" style="left:1299.00px;top:715.30px;letter-spacing:0.544px;">/internal/repos/c2000ware</span>
<span class="t" style="left:1485.20px;top:715.30px;letter-spacing:0.641px;">/libraries/math/temp/source</span>
<span class="t" style="left:1683.40px;top:715.30px;letter-spacing:0.037px;">/CLAcos.asm:</span>
<span class="t" style="left:1779.70px;top:715.30px;letter-spacing:0.542px;">relocation from as</span>
<span class="t" style="left:967.20px;top:737.30px;color:#1a6fd6;letter-spacing:0.793px;text-decoration:underline;text-decoration-thickness:1px;text-underline-offset:2px">#17003-D</span>
<span class="t" style="left:1046.90px;top:737.30px;letter-spacing:0.660px;">/home/ubnuser/ti/repos/c2000ware</span>
<span class="t" style="left:1299.00px;top:737.30px;letter-spacing:0.544px;">/internal/repos/c2000ware</span>
<span class="t" style="left:1485.20px;top:737.30px;letter-spacing:0.641px;">/libraries/math/temp/source</span>
<span class="t" style="left:1683.40px;top:737.30px;letter-spacing:0.037px;">/CLAcos.asm:</span>
<span class="t" style="left:1779.70px;top:737.30px;letter-spacing:0.542px;">relocation from as</span>
<span class="t" style="left:967.20px;top:759.30px;color:#1a6fd6;letter-spacing:0.793px;text-decoration:underline;text-decoration-thickness:1px;text-underline-offset:2px">#17003-D</span>
<span class="t" style="left:1046.60px;top:759.30px;letter-spacing:0.427px;">relocation from function "Cla1Task2" to symbol</span>
<span class="t" style="left:1380.30px;top:759.30px;letter-spacing:0.012px;">"CLAsincosTable_Coef0"</span>
<span class="t" style="left:1551.30px;top:759.30px;letter-spacing:0.399px;">overflowed; the 25-bit relocated address</span>
<span class="t" style="left:1838.40px;top:759.30px;letter-spacing:.5px;">0x1001e5</span>
<span class="t" style="left:967.20px;top:781.30px;color:#1a6fd6;letter-spacing:0.793px;text-decoration:underline;text-decoration-thickness:1px;text-underline-offset:2px">#17003-D</span>
<span class="t" style="left:1046.60px;top:781.30px;letter-spacing:0.427px;">relocation from function "Cla1Task2" to symbol</span>
<span class="t" style="left:1380.30px;top:781.30px;letter-spacing:-0.019px;">"CLAsincosTable_Coef1_pos"</span>
<span class="t" style="left:1583.10px;top:781.30px;letter-spacing:0.399px;">overflowed; the 25-bit relocated address</span>
<span class="t" style="left:1870.20px;top:781.30px;letter-spacing:.5px;">0x1001e5</span>
<span class="t" style="left:967.20px;top:803.30px;color:#1a6fd6;letter-spacing:0.793px;text-decoration:underline;text-decoration-thickness:1px;text-underline-offset:2px">#17003-D</span>
<span class="t" style="left:1046.60px;top:803.30px;letter-spacing:0.427px;">relocation from function "Cla1Task2" to symbol</span>
<span class="t" style="left:1380.30px;top:803.30px;letter-spacing:0.012px;">"CLAsincosTable_Coef2"</span>
<span class="t" style="left:1551.30px;top:803.30px;letter-spacing:0.399px;">overflowed; the 25-bit relocated address</span>
<span class="t" style="left:1838.40px;top:803.30px;letter-spacing:.5px;">0x1001e5</span>
<span class="t" style="left:967.20px;top:825.30px;color:#1a6fd6;letter-spacing:0.793px;text-decoration:underline;text-decoration-thickness:1px;text-underline-offset:2px">#17003-D</span>
<span class="t" style="left:1046.60px;top:825.30px;letter-spacing:0.427px;">relocation from function "Cla1Task2" to symbol</span>
<span class="t" style="left:1380.30px;top:825.30px;">"CLAsincosTable_Coef3_neg"</span>
<span class="t" style="left:1584.40px;top:825.30px;letter-spacing:0.423px;">overflowed; the 25-bit relocated address</span>
<span class="t" style="left:1872.40px;top:825.30px;letter-spacing:.5px;">0x1001e5</span>
<span class="t" style="left:967.20px;top:847.30px;color:#1a6fd6;letter-spacing:0.793px;text-decoration:underline;text-decoration-thickness:1px;text-underline-offset:2px">#17003-D</span>
<span class="t" style="left:1046.60px;top:847.30px;letter-spacing:0.427px;">relocation from function "Cla1Task2" to symbol</span>
<span class="t" style="left:1380.30px;top:847.30px;letter-spacing:-0.210px;">"CLAsincosTable_TABLE_SIZEDivTwoPi"</span>
<span class="t" style="left:1654.50px;top:847.30px;letter-spacing:0.444px;">overflowed; the 25-bit relocated</span>
<span class="t" style="left:1882.40px;top:847.30px;letter-spacing:.5px;">address</span>
</div>
</body></html>
